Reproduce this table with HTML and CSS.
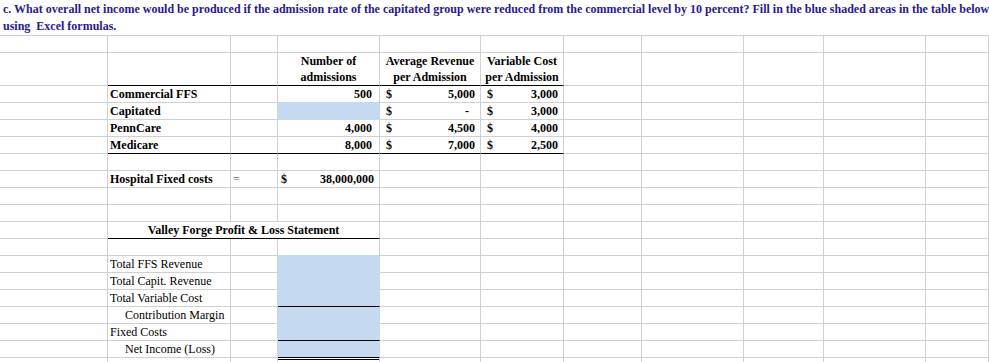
FILE: index.html
```html
<!DOCTYPE html>
<html lang="en">
<head>
    <meta charset="UTF-8">
    <meta name="viewport" content="width=device-width, initial-scale=1.0">
    <title>Valley Forge - Capitated admissions</title>
    <link rel="stylesheet" href="styles.css">
</head>
<body>
    <div class="sheet">
        <!-- Question -->
        <div class="title">
            c. What overall net income would be produced if the admission rate of the capitated group were reduced from the commercial level by 10 percent? Fill in the blue shaded areas in the table below<br>
            using&nbsp; Excel formulas.
        </div>

        <div class="row">
            <div class="c"></div><div class="c"></div><div class="c"></div><div class="c"></div><div class="c"></div><div class="c"></div><div class="c"></div><div class="c"></div><div class="c"></div><div class="c"></div><div class="c"></div>
        </div>

        <!-- Payer table -->
        <div class="row tall">
            <div class="c"></div>
            <div class="c bb"></div>
            <div class="c bb"></div>
            <div class="c head bb">Number of<br>admissions</div>
            <div class="c head bb">Average Revenue<br>per Admission</div>
            <div class="c head bb">Variable Cost<br>per Admission</div>
            <div class="c"></div><div class="c"></div><div class="c"></div><div class="c"></div><div class="c"></div>
        </div>
        <div class="row">
            <div class="c"></div>
            <div class="c b">Commercial FFS</div>
            <div class="c"></div>
            <div class="c num">500</div>
            <div class="c acct"><span>$</span><span>5,000</span></div>
            <div class="c acct"><span>$</span><span>3,000</span></div>
            <div class="c"></div><div class="c"></div><div class="c"></div><div class="c"></div><div class="c"></div>
        </div>
        <div class="row">
            <div class="c"></div>
            <div class="c b">Capitated</div>
            <div class="c"></div>
            <div class="c fill top"></div>
            <div class="c acct"><span>$</span><span class="dash">-</span></div>
            <div class="c acct"><span>$</span><span>3,000</span></div>
            <div class="c"></div><div class="c"></div><div class="c"></div><div class="c"></div><div class="c"></div>
        </div>
        <div class="row">
            <div class="c"></div>
            <div class="c b">PennCare</div>
            <div class="c"></div>
            <div class="c num">4,000</div>
            <div class="c acct"><span>$</span><span>4,500</span></div>
            <div class="c acct"><span>$</span><span>4,000</span></div>
            <div class="c"></div><div class="c"></div><div class="c"></div><div class="c"></div><div class="c"></div>
        </div>
        <div class="row">
            <div class="c"></div>
            <div class="c b bb">Medicare</div>
            <div class="c bb"></div>
            <div class="c num bb">8,000</div>
            <div class="c acct bb"><span>$</span><span>7,000</span></div>
            <div class="c acct bb"><span>$</span><span>2,500</span></div>
            <div class="c"></div><div class="c"></div><div class="c"></div><div class="c"></div><div class="c"></div>
        </div>

        <div class="row">
            <div class="c"></div><div class="c"></div><div class="c"></div><div class="c"></div><div class="c"></div><div class="c"></div><div class="c"></div><div class="c"></div><div class="c"></div><div class="c"></div><div class="c"></div>
        </div>
        <div class="row">
            <div class="c"></div>
            <div class="c b">Hospital Fixed costs</div>
            <div class="c eq">=</div>
            <div class="c acct fixed"><span>$</span><span>38,000,000</span></div>
            <div class="c"></div><div class="c"></div><div class="c"></div><div class="c"></div><div class="c"></div><div class="c"></div><div class="c"></div>
        </div>
        <div class="row">
            <div class="c"></div><div class="c"></div><div class="c"></div><div class="c"></div><div class="c"></div><div class="c"></div><div class="c"></div><div class="c"></div><div class="c"></div><div class="c"></div><div class="c"></div>
        </div>
        <div class="row">
            <div class="c"></div><div class="c"></div><div class="c"></div><div class="c"></div><div class="c"></div><div class="c"></div><div class="c"></div><div class="c"></div><div class="c"></div><div class="c"></div><div class="c"></div>
        </div>

        <!-- Profit & loss -->
        <div class="row">
            <div class="c"></div>
            <div class="c merge bb">Valley Forge Profit &amp; Loss Statement</div>
            <div class="c"></div><div class="c"></div><div class="c"></div><div class="c"></div><div class="c"></div><div class="c"></div><div class="c"></div>
        </div>
        <div class="row">
            <div class="c"></div><div class="c"></div><div class="c"></div><div class="c"></div><div class="c"></div><div class="c"></div><div class="c"></div><div class="c"></div><div class="c"></div><div class="c"></div><div class="c"></div>
        </div>
        <div class="row">
            <div class="c"></div>
            <div class="c">Total FFS Revenue</div>
            <div class="c"></div>
            <div class="c fill top"></div>
            <div class="c"></div><div class="c"></div><div class="c"></div><div class="c"></div><div class="c"></div><div class="c"></div><div class="c"></div>
        </div>
        <div class="row">
            <div class="c"></div>
            <div class="c">Total Capit. Revenue</div>
            <div class="c"></div>
            <div class="c fill"></div>
            <div class="c"></div><div class="c"></div><div class="c"></div><div class="c"></div><div class="c"></div><div class="c"></div><div class="c"></div>
        </div>
        <div class="row">
            <div class="c"></div>
            <div class="c">Total Variable Cost</div>
            <div class="c"></div>
            <div class="c fill bb"></div>
            <div class="c"></div><div class="c"></div><div class="c"></div><div class="c"></div><div class="c"></div><div class="c"></div><div class="c"></div>
        </div>
        <div class="row">
            <div class="c"></div>
            <div class="c ind">Contribution Margin</div>
            <div class="c"></div>
            <div class="c fill"></div>
            <div class="c"></div><div class="c"></div><div class="c"></div><div class="c"></div><div class="c"></div><div class="c"></div><div class="c"></div>
        </div>
        <div class="row">
            <div class="c"></div>
            <div class="c">Fixed Costs</div>
            <div class="c"></div>
            <div class="c fill bb"></div>
            <div class="c"></div><div class="c"></div><div class="c"></div><div class="c"></div><div class="c"></div><div class="c"></div><div class="c"></div>
        </div>
        <div class="row">
            <div class="c"></div>
            <div class="c ind">Net Income (Loss)</div>
            <div class="c"></div>
            <div class="c fill bb"></div>
            <div class="c"></div><div class="c"></div><div class="c"></div><div class="c"></div><div class="c"></div><div class="c"></div><div class="c"></div>
        </div>
        <div class="row">
            <div class="c"></div><div class="c"></div><div class="c"></div><div class="c dbl"></div><div class="c"></div><div class="c"></div><div class="c"></div><div class="c"></div><div class="c"></div><div class="c"></div><div class="c"></div>
        </div>
    </div>
</body>
</html>
```

FILE: styles.css
```css
/* Reset */
* {
    margin: 0;
    padding: 0;
    box-sizing: border-box;
}

body {
    font-family: "Liberation Serif", "Times New Roman", serif;
    font-size: 12px;
    color: #000;
    background: #fff;
    overflow: hidden;
}

.sheet {
    width: 989px;
}

/* Question text above the grid */
.title {
    height: 36px;
    padding: 1px 0 0 3px;
    border-bottom: 1px solid #d0d0d0;
    color: #2a1a8a;
    font-weight: 700;
    line-height: 17px;
    white-space: nowrap;
}

/* Spreadsheet rows */
.row {
    display: grid;
    grid-template-columns: 108px 123px 47px 102px 101px 83px 78px 102px 80px 102px 1fr;
    height: 17px;
}

.row.tall {
    height: 33px;
}

.c {
    border-right: 1px solid #d0d0d0;
    border-bottom: 1px solid #d0d0d0;
    line-height: 16px;
    padding: 0 2px;
    white-space: nowrap;
}

.b {
    font-weight: 700;
}

.head {
    text-align: center;
    font-weight: 700;
}

.num {
    text-align: right;
    padding-right: 7px;
    font-weight: 700;
}

.acct {
    display: flex;
    justify-content: space-between;
    padding: 0 5px 0 6px;
    font-weight: 700;
}

.acct .dash {
    padding-right: 6px;
}

.acct.fixed {
    padding-left: 3px;
}

.eq {
    color: #666;
}

.merge {
    grid-column: span 3;
    text-align: center;
    font-weight: 700;
}

.ind {
    padding-left: 17px;
}

/* Blue input cells */
.fill {
    background: #c5d9f1;
    border-color: #c5d9f1;
    box-shadow: -1px 0 0 #c5d9f1;
}

.fill.top {
    box-shadow: -1px -1px 0 #c5d9f1;
}

/* Black cell borders */
.bb {
    border-bottom-color: #000;
}

.dbl {
    box-shadow: inset 0 1px 0 #fff, inset 0 2px 0 #000;
}
```
